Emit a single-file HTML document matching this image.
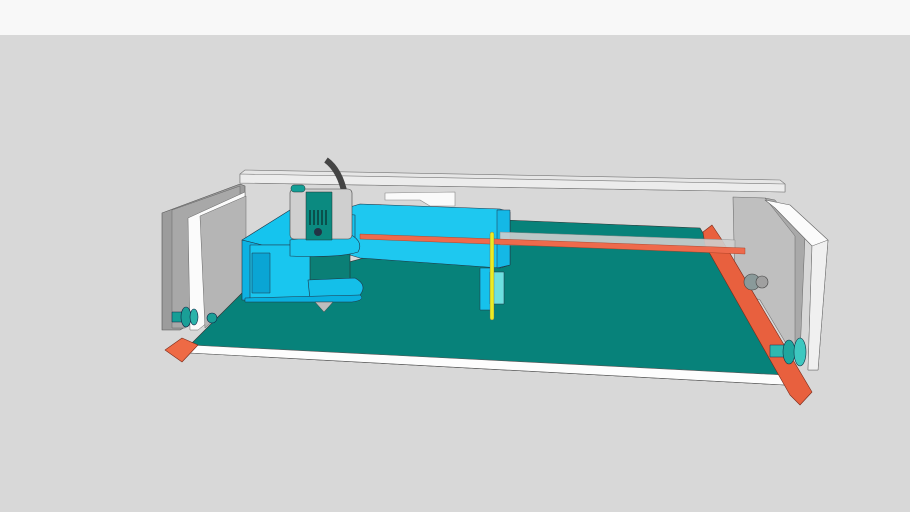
<!DOCTYPE html>
<html><head><meta charset="utf-8"><style>
html,body{margin:0;padding:0;width:910px;height:512px;overflow:hidden;background:#d8d8d8}
</style></head><body>
<svg width="910" height="512" viewBox="0 0 910 512" xmlns="http://www.w3.org/2000/svg" stroke-linejoin="round">
<rect x="0" y="0" width="910" height="35" fill="#f8f8f8"/>
<rect x="0" y="35" width="910" height="477" fill="#d8d8d8"/>
<!-- top rail -->
<polygon points="240,174 245,170 780,180 785,184 785,192 240,183" fill="#e6e6e6" stroke="#777" stroke-width="0.6"/>
<polygon points="240,174 785,184 785,192 240,183" fill="#ececec" stroke="#777" stroke-width="0.6"/>
<!-- back white block -->
<polygon points="385,193 455,192 455,206 430,206 420,200 385,200" fill="#fafafa" stroke="#888" stroke-width="0.6"/>
<!-- left panel -->
<polygon points="162,213 240,184 245,186 245,292 180,330 162,330" fill="#9c9c9c" stroke="#555" stroke-width="0.6"/>
<polygon points="172,210 240,186 240,292 185,328 172,328" fill="#a8a8a8" stroke="#666" stroke-width="0.5"/>
<polygon points="188,218 245,192 245,292 198,330 190,330" fill="#fbfbfb" stroke="#666" stroke-width="0.5"/>
<polygon points="200,216 246,196 246,292 205,328" fill="#b5b5b5" stroke="#666" stroke-width="0.5"/>
<!-- base plate -->
<polygon points="190,345 245,290 505,220 700,228 785,372 785,385 190,353" fill="#07827a" stroke="#333" stroke-width="0.6"/>
<polygon points="190,345 785,375 785,385 190,353" fill="#fdfdfd" stroke="#555" stroke-width="0.6"/>
<!-- right back panel -->
<polygon points="733,197 765,198 800,232 800,355 790,350 760,300 735,290" fill="#bdbdbd" stroke="#666" stroke-width="0.6" opacity="0.9"/>
<polygon points="765,198 775,200 805,236 800,355 795,352 795,236" fill="#a9a9a9" stroke="#666" stroke-width="0.5"/>
<polygon points="765,200 790,205 828,240 818,370 808,370 812,246 775,208" fill="#fbfbfb" stroke="#666" stroke-width="0.6"/>
<polygon points="812,246 828,240 818,370 808,370" fill="#f0f0f0" stroke="#666" stroke-width="0.5"/>
<!-- right orange bar -->
<polygon points="703,232 712,225 722,240 812,392 800,405 790,395 705,245" fill="#e8603e" stroke="#7a2a1a" stroke-width="0.6"/>
<!-- left orange -->
<polygon points="165,350 182,338 198,345 182,362" fill="#ee6a45" stroke="#7a2a1a" stroke-width="0.6"/>
<!-- knobs right -->
<circle cx="752" cy="282" r="8" fill="#8a9a9a" stroke="#444" stroke-width="0.6"/>
<circle cx="762" cy="282" r="6" fill="#a0a0a0" stroke="#444" stroke-width="0.6"/>
<rect x="770" y="345" width="14" height="12" fill="#2fb8b0" stroke="#135" stroke-width="0.5"/>
<ellipse cx="789" cy="352" rx="6" ry="12" fill="#1fa69e" stroke="#134" stroke-width="0.6"/>
<ellipse cx="800" cy="352" rx="6" ry="14" fill="#3ec8c0" stroke="#134" stroke-width="0.6"/>
<!-- knobs left -->
<rect x="172" y="312" width="12" height="10" fill="#159e96" stroke="#124" stroke-width="0.5"/>
<ellipse cx="186" cy="317" rx="5" ry="10" fill="#1a9f97" stroke="#124" stroke-width="0.6"/>
<ellipse cx="194" cy="317" rx="4" ry="8" fill="#2ab3aa" stroke="#124" stroke-width="0.6"/>
<circle cx="212" cy="318" r="5" fill="#1a9f97" stroke="#124" stroke-width="0.6"/>
<!-- carriage back arm -->
<polygon points="350,207 360,204 500,209 510,212 510,265 500,268 360,258 350,255" fill="#1ec8f0" stroke="#234" stroke-width="0.6"/>
<polygon points="497,210 510,210 510,265 497,268" fill="#14b8e6" stroke="#234" stroke-width="0.5"/>
<!-- rods (in front) -->
<polygon points="500,232 735,240 735,250 500,245" fill="#cfcfcf" stroke="#888" stroke-width="0.5" opacity="0.9"/>
<polygon points="360,234 745,248 745,254 360,239" fill="#ee6a4c" stroke="#a03a20" stroke-width="0.4"/>
<!-- front block -->
<polygon points="242,240 290,210 355,215 355,245 262,245" fill="#15c4ee" stroke="#234" stroke-width="0.6"/>
<polygon points="242,240 262,245 262,300 242,300" fill="#0db2e2" stroke="#234" stroke-width="0.6"/>
<polygon points="250,245 315,245 315,300 250,300" fill="#19c6ef" stroke="#234" stroke-width="0.6"/>
<rect x="252" y="253" width="18" height="40" fill="#0aa5d4" stroke="#234" stroke-width="0.5"/>
<!-- router motor -->
<rect x="310" y="250" width="40" height="48" fill="#0b7f76" stroke="#233" stroke-width="0.6"/>
<path d="M308,280 L355,278 Q368,285 360,295 L310,300 Z" fill="#14bfe9" stroke="#234" stroke-width="0.6"/>
<path d="M245,298 L360,295 Q366,300 352,302 L245,302 Z" fill="#0ab0df" stroke="#234" stroke-width="0.5"/>
<polygon points="315,302 333,302 324,312" fill="#bdbdbd" stroke="#444" stroke-width="0.5"/>
<!-- top ring -->
<path d="M290,240 L345,232 Q365,240 358,252 Q340,258 290,256 Z" fill="#1ac7ef" stroke="#234" stroke-width="0.6"/>
<!-- router body -->
<path d="M326,160 Q340,170 345,195" fill="none" stroke="#444" stroke-width="6"/>
<rect x="290" y="189" width="62" height="50" rx="4" fill="#cfcfcf" stroke="#444" stroke-width="0.6"/>
<rect x="306" y="192" width="26" height="48" fill="#0b8a80" stroke="#233" stroke-width="0.5"/>
<g stroke="#0a2a2a" stroke-width="1.2"><line x1="310" y1="210" x2="310" y2="225"/><line x1="314" y1="210" x2="314" y2="225"/><line x1="318" y1="210" x2="318" y2="225"/><line x1="322" y1="210" x2="322" y2="225"/><line x1="326" y1="210" x2="326" y2="225"/></g>
<circle cx="318" cy="232" r="4" fill="#234"/>
<rect x="291" y="185" width="14" height="7" rx="3" fill="#139f96" stroke="#233" stroke-width="0.5"/>
<!-- yellow pin and slider -->
<rect x="480" y="268" width="14" height="42" fill="#16c1ec" stroke="#234" stroke-width="0.5"/>
<rect x="490" y="272" width="14" height="32" fill="#6de0e0" stroke="#234" stroke-width="0.5"/>
<rect x="490" y="232" width="4" height="88" rx="2" fill="#ecec22" stroke="#666" stroke-width="0.4"/>
</svg>
</body></html>
